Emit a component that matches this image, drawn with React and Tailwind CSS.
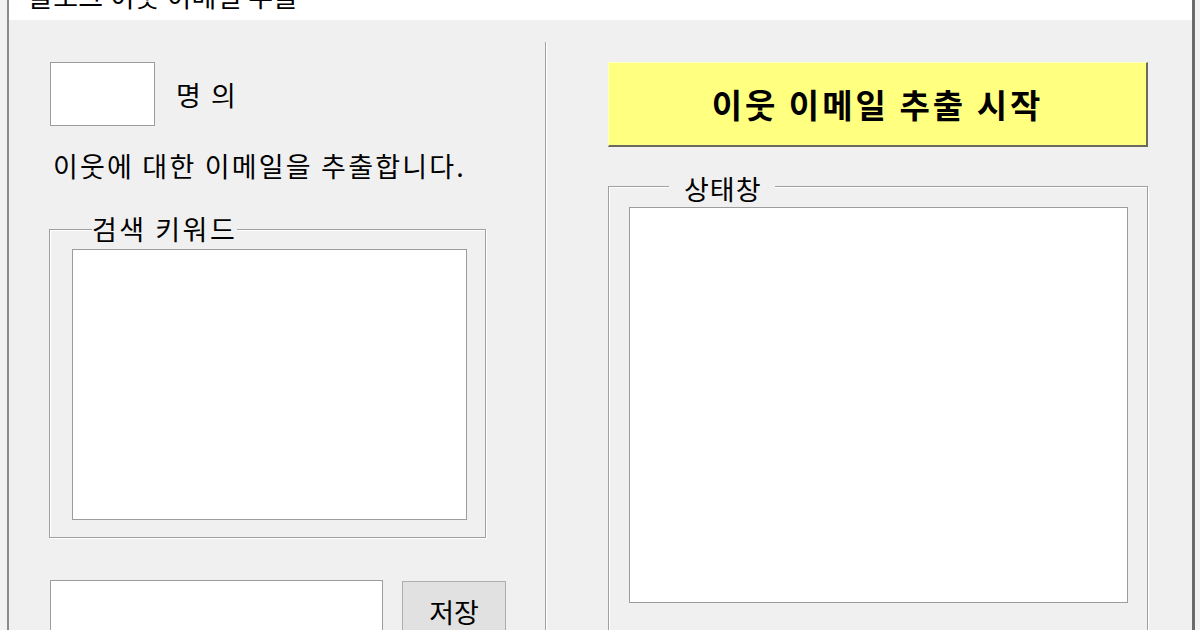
import React from "react";

const font = { fontFamily: '"Noto Sans CJK KR", "Noto Sans", sans-serif' };

function GroupBox({ legend, legendClass, className, children }) {
  return (
    <div
      className={
        "relative border border-[#a0a0a0] shadow-[inset_1px_1px_0_#ffffff,1px_1px_0_#ffffff] " +
        className
      }
    >
      <span
        className={
          "absolute bg-[#f0f0f0] text-[27px] leading-[27px] text-black whitespace-nowrap " +
          legendClass
        }
      >
        {legend}
      </span>
      {children}
    </div>
  );
}

export default function App() {
  return (
    <div
      className="w-[1200px] h-[630px] overflow-hidden bg-[#f2f2f2] pl-[7px] pr-[5px]"
      style={font}
    >
      <div className="h-full flex flex-col border-l-2 border-l-[#8a8a8a] border-r-[3px] border-r-[#6b6b6b]">
        {/* Title bar */}
        <div className="h-[20px] shrink-0 bg-white overflow-hidden pl-[19px]">
          <div className="mt-[-18px] text-[27px] leading-[27px] tracking-[0.3px] text-black whitespace-nowrap">
            블로그 이웃 이메일 추출
          </div>
        </div>

        {/* Body */}
        <div className="flex-1 flex bg-[#f0f0f0] min-h-0">
          {/* Left column */}
          <div className="w-[536px] shrink-0 pl-[41px] pt-[42px] flex flex-col">
            <div className="flex items-center h-[64px]">
              <div className="w-[105px] h-[64px] bg-white border border-[#9c9c9c]" />
              <span className="ml-[21px] text-[27px] leading-[27px] tracking-[2px] text-black">
                명 의
              </span>
            </div>
            <div className="mt-[26px] ml-[3px] text-[27px] leading-[27px] tracking-[2.2px] text-black whitespace-nowrap">
              이웃에 대한 이메일을 추출합니다.
            </div>
            <GroupBox
              legend="검색 키워드"
              legendClass="left-[42px] top-[-15px] tracking-[2.5px]"
              className="mt-[50px] ml-[-1px] w-[437px] h-[309px] pl-[22px] pt-[19px] shrink-0"
            >
              <div className="w-[395px] h-[271px] bg-white border border-[#9c9c9c]" />
            </GroupBox>
            <div className="mt-[42px] flex items-start">
              <div className="w-[333px] h-[62px] bg-white border border-[#9c9c9c] shrink-0" />
              <div className="ml-[19px] mt-[1px] w-[104px] h-[60px] bg-[#e1e1e1] border border-[#adadad] flex items-center justify-center text-[27px] leading-[27px] text-black shrink-0">
                저장
              </div>
            </div>
          </div>

          {/* Separator */}
          <div className="w-[2px] shrink-0 mt-[22px] border-l border-l-[#a0a0a0] bg-white" />

          {/* Right column */}
          <div className="flex-1 pl-[61px] pt-[42px] flex flex-col">
            <div className="w-[540px] h-[85px] shrink-0 bg-[#ffff80] border-t border-l border-t-[#ffffc8] border-l-[#ffffc8] border-r-2 border-b-2 border-r-[#6a6a60] border-b-[#6a6a60] flex items-center justify-center">
              <span className="text-[33px] leading-[33px] font-bold tracking-[3px] text-black whitespace-nowrap">
                이웃 이메일 추출 시작
              </span>
            </div>
            <GroupBox
              legend="상태창"
              legendClass="left-[60px] top-[-12px] pl-[15px] pr-[13px] tracking-[1px]"
              className="mt-[39px] w-[540px] h-[460px] pl-[20px] pt-[20px] shrink-0"
            >
              <div className="w-[499px] h-[396px] bg-white border border-[#9c9c9c]" />
            </GroupBox>
          </div>
        </div>
      </div>
    </div>
  );
}
